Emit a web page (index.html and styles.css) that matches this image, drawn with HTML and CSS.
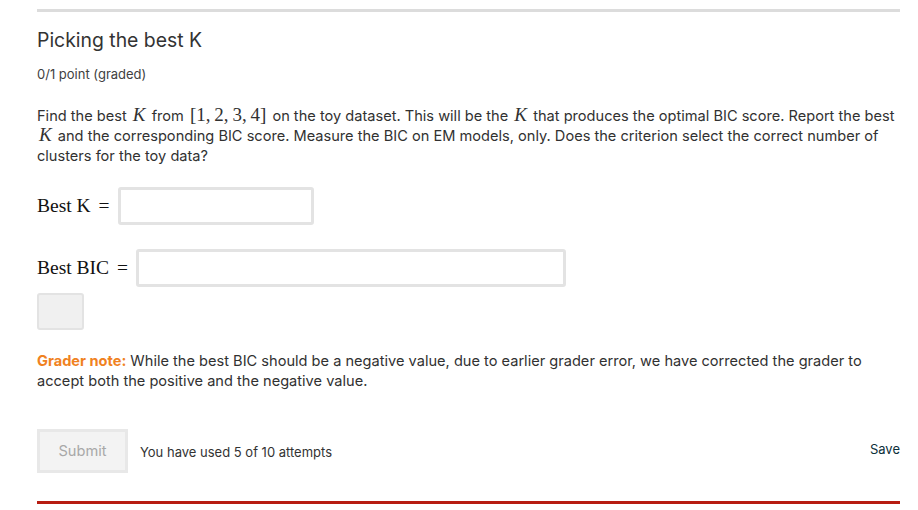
FILE: index.html
```html
<!DOCTYPE html>
<html>

<head>
    <meta charset="utf-8">
    <title>Picking the best K</title>
    <link rel="stylesheet" href="styles.css">
</head>

<body>
    <div class="problem">
        <div class="rule-top"></div>
        <h3 class="title">Picking the best K</h3>
        <div class="points">0/1 point (graded)</div>
        <p class="question">
            Find the best <span class="math mi">K</span> from <span class="math">[1,&thinsp;2,&thinsp;3,&thinsp;4]</span> on the toy dataset.
            This will be the <span class="math mi">K</span> that produces the optimal BIC score. Report the best
            <span class="math mi">K</span> and the corresponding BIC score. Measure the BIC on EM models, only. Does the
            criterion select the correct number of clusters for the toy data?
        </p>
        <div class="answer">
            <span class="label">Best K <span class="eq">=</span></span>
            <input class="field short" type="text">
        </div>
        <div class="answer">
            <span class="label">Best BIC <span class="eq">=</span></span>
            <input class="field long" type="text">
        </div>
        <div class="blank-btn"></div>
        <p class="note"><strong>Grader note:</strong> While the best BIC should be a negative value, due to earlier
            grader error, we have corrected the grader to accept both the positive and the negative value.</p>
        <div class="actions">
            <button class="submit" disabled>Submit</button>
            <span class="attempts">You have used 5 of 10 attempts</span>
            <span class="save">Save</span>
        </div>
        <div class="rule-bottom"></div>
    </div>
</body>

</html>
```

FILE: styles.css
```css
html,
body {
    margin: 0;
    padding: 0;
    background: #fff;
}

* {
    box-sizing: border-box;
}

.problem {
    width: 863px;
    margin-left: 37px;
    padding-top: 9px;
    font-family: Inter, "Noto Sans", sans-serif;
    color: #313131;
}

.rule-top {
    height: 3px;
    background-color: #dcdcdc;
}

.title {
    margin: 14px 0 0;
    font-size: 19.4px;
    font-weight: 400;
    line-height: 28px;
    color: #333;
}

.points {
    margin-top: 12px;
    font-size: 13px;
    line-height: 16px;
    color: #414141;
}

.question {
    margin: 24px 0 0;
    font-size: 14.6px;
    line-height: 20px;
}

.math {
    font-family: "Liberation Serif", serif;
    font-size: 19px;
    line-height: 16px;
    padding: 0 2px;
}

.mi {
    font-style: italic;
}

.answer {
    display: flex;
    align-items: center;
    margin-top: 21px;
}

.answer + .answer {
    margin-top: 24px;
}

.label {
    font-family: "Liberation Serif", serif;
    font-size: 19.5px;
    color: #111;
    margin-right: 8px;
}

.eq {
    margin-left: 3px;
}

.field {
    height: 38px;
    border: 3px solid #e3e3e3;
    border-radius: 3px;
    background: #fff;
    outline: none;
}

.field.short {
    width: 196px;
}

.field.long {
    width: 430px;
}

.blank-btn {
    width: 47px;
    height: 37px;
    margin-top: 6px;
    background-color: #f0f0f0;
    border: 2px solid #e3e3e3;
    border-radius: 3px;
}

.note {
    margin: 21px 0 0;
    font-size: 14.6px;
    line-height: 20px;
}

.note strong {
    color: #f0821f;
}

.actions {
    display: flex;
    align-items: center;
    margin-top: 38px;
}

.submit {
    flex: none;
    width: 91px;
    height: 44px;
    background: #f3f3f3;
    border: 3px solid #e8e8e8;
    border-radius: 0;
    font-family: Inter, "Noto Sans", sans-serif;
    font-size: 14.6px;
    color: #a8a8a8;
}

.attempts {
    margin-left: 12px;
    margin-top: 2px;
    font-size: 13px;
    color: #333;
}

.save {
    margin-left: auto;
    margin-top: -5px;
    font-size: 13px;
    color: #0c2f3a;
}

.rule-bottom {
    height: 3px;
    margin-top: 28px;
    background-color: #b71d12;
}
```
